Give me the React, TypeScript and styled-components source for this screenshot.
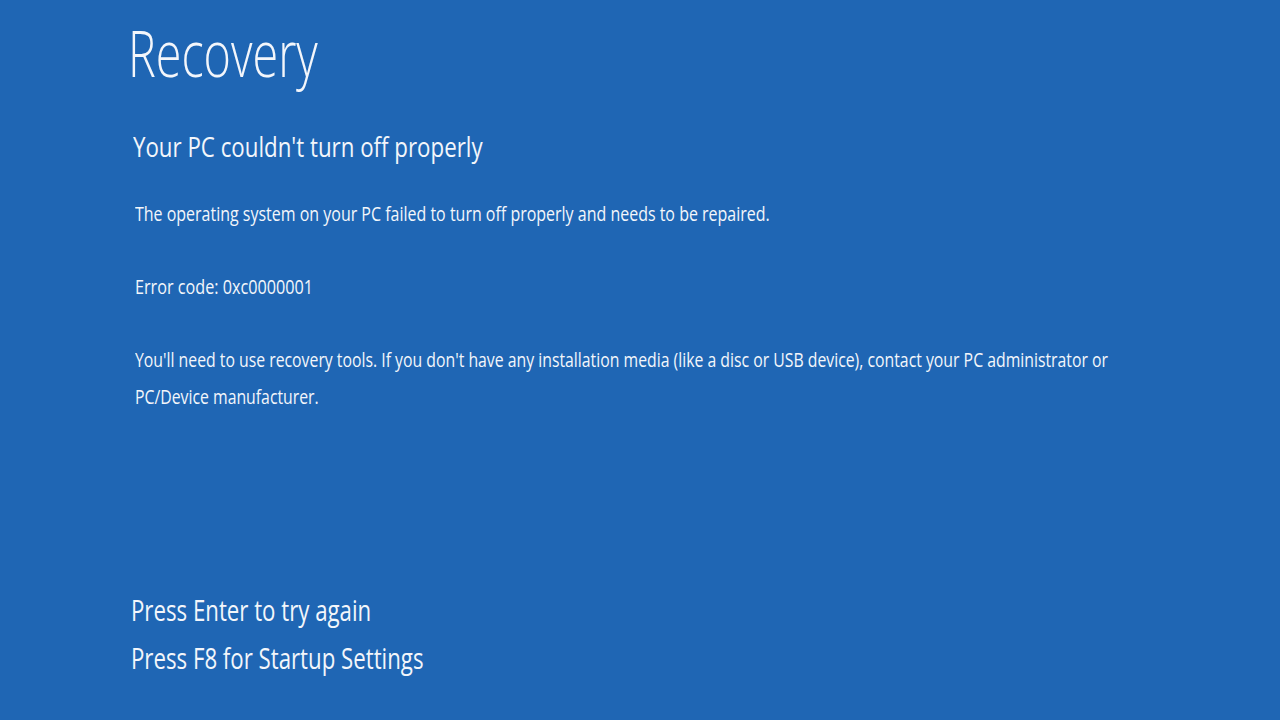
import React from "react";
import styled, { createGlobalStyle } from "styled-components";

const Global = createGlobalStyle`
  html, body { margin: 0; padding: 0; }
  body { background: #1f66b4; }
`;

const Screen = styled.div`
  box-sizing: border-box;
  width: 100%;
  height: 100vh;
  min-height: 720px;
  background: #1f66b4;
  color: #f3f6fb;
  font-family: "Open Sans", "Noto Sans", "Liberation Sans", sans-serif;
  display: flex;
  flex-direction: column;
  padding: 15px 0 38px 128px;
  overflow: hidden;
`;

const Squeeze = styled.div<{ $scale: number; $indent?: number }>`
  transform: scaleX(${(p) => p.$scale});
  transform-origin: 0 0;
  margin-left: ${(p) => p.$indent ?? 0}px;
  margin-right: 0;
  white-space: nowrap;
`;

const Title = styled(Squeeze).attrs({ as: "h1" })`
  margin-top: 0;
  margin-bottom: 0;
  font-size: 64px;
  line-height: 76px;
  font-weight: 300;
`;

const Heading = styled(Squeeze).attrs({ as: "h2" })`
  margin-top: 35px;
  margin-bottom: 0;
  font-size: 28px;
  line-height: 40px;
  font-weight: 400;
`;

const Body = styled(Squeeze).attrs({ as: "p" })<{ $gap: number }>`
  margin-top: ${(p) => p.$gap}px;
  margin-bottom: 0;
  font-size: 20px;
  line-height: 37px;
  font-weight: 400;
`;

const Spacer = styled.div`
  flex: 1;
`;

const Options = styled.div`
  display: flex;
  flex-direction: column;
`;

const Option = styled(Squeeze)`
  font-size: 30px;
  line-height: 48px;
  font-weight: 400;
`;

export default function App() {
  return (
    <>
      <Global />
      <Screen>
        <Title $scale={0.73}>Recovery</Title>
        <Heading $scale={0.796} $indent={5}>Your PC couldn't turn off properly</Heading>
        <Body $scale={0.799} $indent={7} $gap={29}>
          The operating system on your PC failed to turn off properly and needs to be repaired.
        </Body>
        <Body $scale={0.81} $indent={7} $gap={36}>
          Error code: 0xc0000001
        </Body>
        <Body $scale={0.79} $indent={7} $gap={36}>
          You'll need to use recovery tools. If you don't have any installation media (like a disc or USB device), contact your PC administrator or
          <br />
          PC/Device manufacturer.
        </Body>
        <Spacer />
        <Options>
          <Option $scale={0.741} $indent={3}>Press Enter to try again</Option>
          <Option $scale={0.741} $indent={3}>Press F8 for Startup Settings</Option>
        </Options>
      </Screen>
    </>
  );
}
